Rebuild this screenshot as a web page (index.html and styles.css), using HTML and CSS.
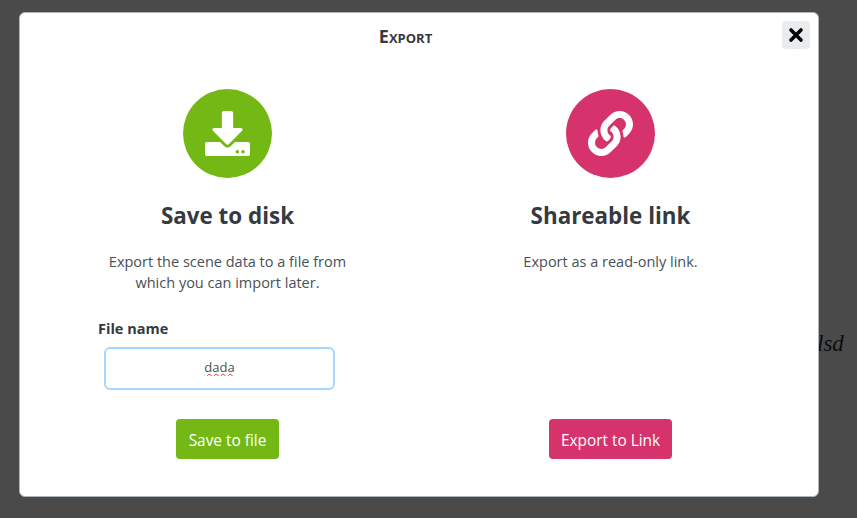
FILE: index.html
```html
<!DOCTYPE html>
<html lang="en">
<head>
<meta charset="utf-8">
<title>Export</title>
<link rel="stylesheet" href="styles.css">
</head>
<body>
<div class="scene-text">lsd</div>
<div class="overlay">
  <div class="modal">
    <h2 class="title">Export</h2>
    <button class="close" aria-label="Close">
      <svg viewBox="0 0 16 16" width="16" height="16"><path d="M3 3 13 13M13 3 3 13" fill="none" stroke="#000" stroke-width="3.6" stroke-linecap="round"/></svg>
    </button>
    <div class="cards">
      <section class="card">
        <div class="badge badge-green">
          <svg viewBox="0 0 512 512" width="45" height="45">
            <path fill="#fff" d="M216 0h80c13.300 0 24 10.700 24 24v168h87.700c17.800 0 26.700 21.500 14.100 34.100L269.700 378.300c-7.500 7.500-19.800 7.500-27.300 0L90.100 226.100c-12.600-12.600-3.700-34.100 14.100-34.100H192V24c0-13.300 10.700-24 24-24zm296 376v112c0 13.300-10.700 24-24 24H24c-13.300 0-24-10.700-24-24V376c0-13.300 10.700-24 24-24h146.700l49 49c20.100 20.100 52.500 20.100 72.600 0l49-49H488c13.300 0 24 10.700 24 24zm-124 88c0-11-9-20-20-20s-20 9-20 20 9 20 20 20 20-9 20-20zm64 0c0-11-9-20-20-20s-20 9-20 20 9 20 20 20 20-9 20-20z"/>
          </svg>
        </div>
        <h3 class="card-title">Save to disk</h3>
        <p class="card-text">Export the scene data to a file from which you can import later.</p>
        <div class="field">
          <label class="field-label" for="fname">File name</label>
          <input class="field-input" id="fname" value="dada">
        </div>
        <button class="action action-green">Save to file</button>
      </section>
      <section class="card">
        <div class="badge badge-pink">
          <svg viewBox="0 0 512 512" width="45" height="45">
            <path fill="#fff" d="M326.612 185.391c59.747 59.809 58.927 155.698.36 214.590-.11.12-.24.25-.36.37l-67.200 67.200c-59.270 59.270-155.699 59.262-214.960 0-59.270-59.260-59.270-155.700 0-214.960l37.106-37.106c9.840-9.840 26.786-3.300 27.294 10.606.648 17.722 3.826 35.527 9.690 52.721 1.986 5.822.567 12.262-3.783 16.612l-13.087 13.087c-28.026 28.026-28.905 73.660-1.155 101.960 28.024 28.579 74.086 28.749 102.325.51l67.200-67.190c28.191-28.191 28.073-73.757 0-101.830-3.701-3.694-7.429-6.564-10.341-8.569a16.037 16.037 0 0 1-6.947-12.606c-.396-10.567 3.348-21.456 11.698-29.806l21.054-21.055c5.521-5.521 14.182-6.199 20.584-1.731a152.482 152.482 0 0 1 20.522 17.197zM467.547 44.449c-59.261-59.262-155.690-59.270-214.960 0l-67.200 67.200c-.12.12-.25.25-.36.37-58.566 58.892-59.387 154.781.36 214.590a152.454 152.454 0 0 0 20.521 17.196c6.402 4.468 15.064 3.789 20.584-1.731l21.054-21.055c8.350-8.350 12.094-19.239 11.698-29.806a16.037 16.037 0 0 0-6.947-12.606c-2.912-2.005-6.640-4.875-10.341-8.569-28.073-28.073-28.191-73.639 0-101.830l67.200-67.190c28.239-28.239 74.300-28.069 102.325.51 27.750 28.300 26.872 73.934-1.155 101.960l-13.087 13.087c-4.350 4.350-5.769 10.790-3.783 16.612 5.864 17.194 9.042 34.999 9.690 52.721.509 13.906 17.454 20.446 27.294 10.606l37.106-37.106c59.271-59.260 59.271-155.699.001-214.959z"/>
          </svg>
        </div>
        <h3 class="card-title">Shareable link</h3>
        <p class="card-text">Export as a read-only link.</p>
        <button class="action action-pink">Export to Link</button>
      </section>
    </div>
  </div>
</div>
</body>
</html>
```

FILE: styles.css
```css
* { box-sizing: border-box; }

html, body {
  margin: 0;
  height: 100%;
  overflow: hidden;
}

body {
  background: #4a4a4a;
  font-family: "Open Sans", "Noto Sans", sans-serif;
  color: #343a40;
}

.scene-text {
  position: absolute;
  left: 817px;
  top: 328px;
  font-family: "Liberation Serif", serif;
  font-style: italic;
  font-size: 23px;
  line-height: 32px;
  color: #0c0c0c;
}

.overlay {
  position: relative;
  padding: 12px 38px 21px 19px;
  height: 100%;
}

.modal {
  position: relative;
  height: 100%;
  background: #fff;
  border: 1px solid #adb5bd;
  border-radius: 6px;
  padding: 0 16px;
  display: flex;
  flex-direction: column;
}

.title {
  margin: 0;
  padding: 11px 27px 0 0;
  text-align: center;
  font-size: 18px;
  line-height: 24px;
  font-weight: 700;
  font-variant: small-caps;
  color: #343a40;
}

.close {
  position: absolute;
  top: 8px;
  right: 8px;
  width: 28px;
  height: 28px;
  padding: 0;
  border: 0;
  border-radius: 4px;
  background: #e9ecef;
  display: flex;
  align-items: center;
  justify-content: center;
}

.cards {
  flex: 1;
  display: grid;
  grid-template-columns: 383px 383px;
  padding-top: 41px;
  padding-bottom: 37px;
}

.card {
  display: flex;
  flex-direction: column;
  align-items: center;
}

.badge {
  width: 89px;
  height: 89px;
  border-radius: 50%;
  flex: none;
  display: flex;
  align-items: center;
  justify-content: center;
}

.badge svg { display: block; }
.badge-green { background: #74b816; }
.badge-pink { background: #d6336c; }

.card-title {
  margin: 23px 0 0;
  font-size: 22.4px;
  line-height: 30px;
  font-weight: 700;
  color: #343a40;
}

.card-text {
  margin: 20px 0 0;
  width: 260px;
  text-align: center;
  font-size: 14.5px;
  line-height: 21px;
  color: #495057;
}

.field {
  margin-top: 26px;
  width: 100%;
  padding-left: 62px;
}

.field-label {
  display: block;
  font-size: 14.5px;
  line-height: 20px;
  font-weight: 700;
  color: #343a40;
}

.field-input {
  display: block;
  margin: 8px 0 0 6px;
  width: 231px;
  height: 43px;
  border: 2px solid #a5d8ff;
  border-radius: 6px;
  outline: 0;
  padding: 0 2px 3px;
  background: #fff;
  text-align: center;
  font-family: inherit;
  font-size: 13px;
  color: #495057;
  text-decoration: underline wavy #e03131 1px;
}

.action {
  margin-top: auto;
  height: 40px;
  padding: 2px 13px 0;
  border: 0;
  border-radius: 4px;
  color: #fff;
  font-family: inherit;
  font-size: 15.4px;
}

.action-green { background: #74b816; }
.action-pink { background: #d6336c; padding: 2px 12px 0; }
```
